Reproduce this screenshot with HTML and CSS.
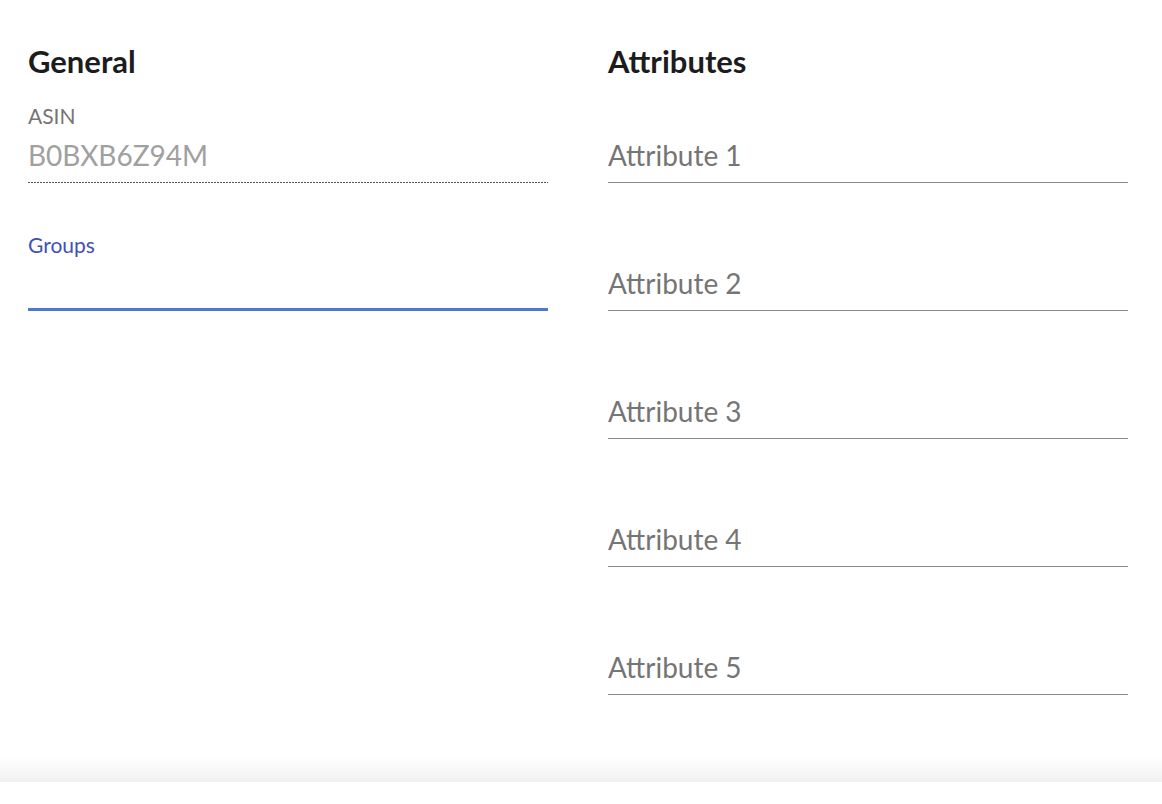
FILE: index.html
```html
<!DOCTYPE html>
<html lang="en">

<head>
    <meta charset="UTF-8">
    <meta name="viewport" content="width=device-width, initial-scale=1.0">
    <title>Product</title>
    <link rel="stylesheet" href="styles.css">
</head>

<body>
    <div class="panel">
        <div class="column">
            <h2>General</h2>
            <div class="fields">
                <div class="field">
                    <label class="field-label">ASIN</label>
                    <div class="field-input disabled">B0BXB6Z94M</div>
                </div>
                <div class="field">
                    <label class="field-label focused">Groups</label>
                    <div class="field-input active"></div>
                </div>
            </div>
        </div>

        <div class="column">
            <h2>Attributes</h2>
            <div class="fields">
                <div class="field">
                    <label class="field-label"></label>
                    <div class="field-input empty">Attribute 1</div>
                </div>
                <div class="field">
                    <label class="field-label"></label>
                    <div class="field-input empty">Attribute 2</div>
                </div>
                <div class="field">
                    <label class="field-label"></label>
                    <div class="field-input empty">Attribute 3</div>
                </div>
                <div class="field">
                    <label class="field-label"></label>
                    <div class="field-input empty">Attribute 4</div>
                </div>
                <div class="field">
                    <label class="field-label"></label>
                    <div class="field-input empty">Attribute 5</div>
                </div>
            </div>
        </div>
    </div>
</body>

</html>
```

FILE: styles.css
```css
body {
    margin: 0;
    background-color: white;
    font-family: Lato, "Open Sans", sans-serif;
    color: #1c1c1c;
}

.panel {
    display: flex;
    gap: 60px;
    height: 782px;
    box-sizing: border-box;
    padding: 43px 28px 0 28px;
    background: linear-gradient(to bottom, white calc(100% - 26px), #f1f1f1); /* sombra do rodapé */
}

.column {
    width: 520px;
}

h2 {
    margin: 0 0 24px 0;
    font-size: 31px;
    line-height: 36px;
    font-weight: 700;
}

.fields {
    display: flex;
    flex-direction: column;
    gap: 48px;
}

.field-label {
    display: block;
    height: 25px;
    font-size: 21px;
    line-height: 25px;
    color: #757575;
}

.field-label.focused {
    color: #3f51b5;
    padding-top: 1px;
}

.field-input {
    margin-top: 11px;
    height: 32px;
    padding-bottom: 11px;
    font-size: 28px;
    line-height: 32px;
    border-bottom: 1px solid #8a8a8a;
}

.field-input.empty {
    color: #757575;
}

.field-input.disabled {
    color: #a0a0a0;
    border-bottom: none;
    padding-bottom: 12px;
    background-image: linear-gradient(to right, #555 67%, transparent 0%);
    background-size: 3px 1px;
    background-repeat: repeat-x;
    background-position: left bottom;
}

.field-input.active {
    margin-top: 10px;
    padding-bottom: 9px;
    border-bottom: 3px solid #4d78cc;
}
```
